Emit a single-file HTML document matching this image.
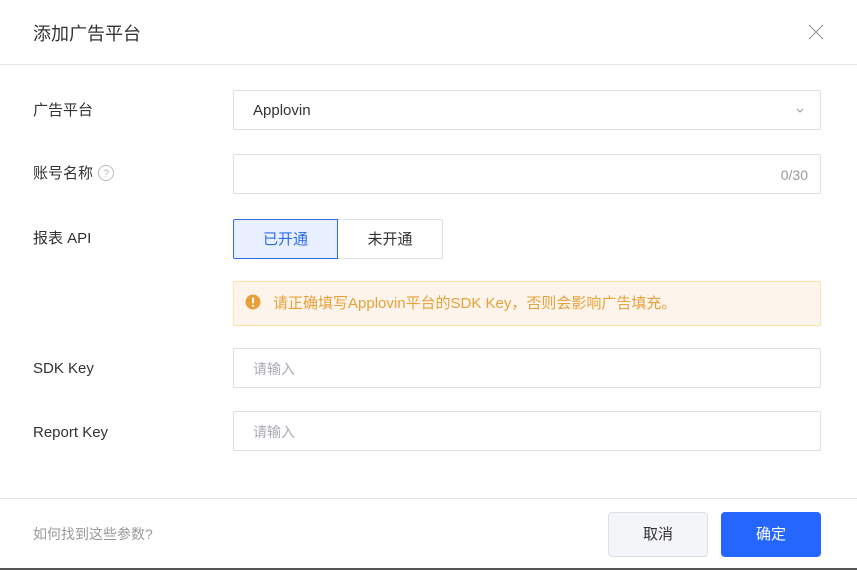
<!DOCTYPE html>
<html><head><meta charset="utf-8"><style>
*{box-sizing:border-box;margin:0;padding:0}
body{width:857px;height:570px;background:#fff;font-family:"Liberation Sans","Noto Sans CJK SC",sans-serif;position:relative;overflow:hidden;color:#333}
.a{position:absolute}
.lbl{position:absolute;left:33px;font-size:15px;color:#333;line-height:20px}
.box{position:absolute;left:233px;width:588px;height:40px;border:1px solid #dcdfe6;border-radius:2px;font-size:15px;line-height:40px;padding-left:19px}
.ph{color:#a8abb2;font-size:14px}
</style></head><body>
<div class="a" style="left:33px;top:22px;font-size:18px;color:#333;line-height:24px">添加广告平台</div>
<svg class="a" style="left:807px;top:23px" width="18" height="18" viewBox="0 0 18 18"><path d="M2 2L16 16M16 2L2 16" stroke="#999" stroke-width="1.1" fill="none"/></svg>
<div class="a" style="left:0;top:64px;width:857px;height:1px;background:#e4e5ea"></div>

<div class="lbl" style="top:101px">广告平台</div>
<div class="box" style="top:90px;color:#333">Applovin
<svg class="a" style="right:15px;top:16px" width="10" height="8" viewBox="0 0 10 8"><path d="M2 2L5 5L8 2" stroke="#999" stroke-width="1" fill="none"/></svg></div>

<div class="lbl" style="top:164px">账号名称</div>
<svg class="a" style="left:97px;top:164px" width="18" height="18" viewBox="0 0 18 18"><circle cx="9" cy="9" r="7.5" fill="none" stroke="#bbb" stroke-width="1"/><text x="9" y="13" font-size="11" text-anchor="middle" fill="#bbb" font-family="Liberation Sans">?</text></svg>
<div class="box" style="top:154px"><span class="a ph" style="right:12px;top:0;color:#999">0/30</span></div>

<div class="lbl" style="top:229px">报表 API</div>
<div class="a" style="left:233px;top:219px;width:105px;height:40px;border:1px solid #2f6bf0;background:#e8f0ff;color:#2f6bf0;font-size:15px;line-height:40px;text-align:center;border-radius:2px 0 0 2px">已开通</div>
<div class="a" style="left:338px;top:219px;width:105px;height:40px;border:1px solid #dcdfe6;border-left:none;color:#333;font-size:15px;line-height:40px;text-align:center;border-radius:0 2px 2px 0">未开通</div>

<div class="a" style="left:233px;top:281px;width:588px;height:45px;border:1px solid #fbe3a8;background:#fdf5ec;border-radius:2px"></div>
<svg class="a" style="left:245px;top:294px" width="16" height="16" viewBox="0 0 16 16"><circle cx="8" cy="8" r="7.5" fill="#e8a13a"/><rect x="7" y="3.5" width="2" height="6" rx="1" fill="#fff"/><circle cx="8" cy="11.8" r="1.1" fill="#fff"/></svg>
<div class="a" style="left:273px;top:294px;font-size:15px;color:#e8a13a;line-height:20px">请正确填写Applovin平台的SDK Key，否则会影响广告填充。</div>

<div class="lbl" style="top:359px">SDK Key</div>
<div class="box" style="top:348px"><span class="ph">请输入</span></div>
<div class="lbl" style="top:423px">Report Key</div>
<div class="box" style="top:411px"><span class="ph">请输入</span></div>

<div class="a" style="left:0;top:498px;width:857px;height:1px;background:#e4e5ea"></div>
<div class="a" style="left:33px;top:524px;font-size:14px;color:#999;line-height:20px">如何找到这些参数?</div>
<div class="a" style="left:608px;top:512px;width:100px;height:45px;border:1px solid #dcdfe6;background:#f4f5f8;border-radius:4px;text-align:center;line-height:43px;font-size:15px;color:#333">取消</div>
<div class="a" style="left:721px;top:512px;width:100px;height:45px;background:#2466ff;border-radius:4px;text-align:center;line-height:45px;font-size:15px;color:#fff">确定</div>
<div class="a" style="left:0;top:568px;width:857px;height:2px;background:#555"></div>
</body></html>
